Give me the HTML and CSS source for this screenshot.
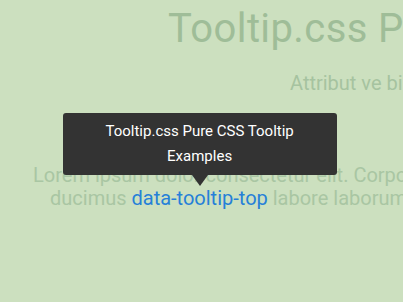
FILE: index.html
```html
<!DOCTYPE html>
<html lang="en">
  <head>
    <meta charset="UTF-8" />
    <meta name="viewport" content="width=device-width, initial-scale=1.0" />
    <title>Tooltip.css Pure CSS Tooltip Examples</title>
    <link rel="stylesheet" href="styles.css">
  </head>
  <body>
    <div class="page">
      <h1 class="title">Tooltip.css Pure CSS Tooltip Examples</h1>
      <p class="subtitle">Attribut ve bileşenler ile kullanım</p>

      <div class="lorem">
        <span class="line line-1">Lorem ipsum dolor consectetur elit. Corporis</span>
        <span class="line line-2">ducimus
          <a href="#" class="tip">data-tooltip-top<span class="tip-box">Tooltip.css Pure CSS Tooltip Examples</span></a>
          labore laborum
        </span>
      </div>
    </div>
  </body>
</html>
```

FILE: styles.css
```css
html,
body {
  margin: 0;
  height: 100%;
}
body {
  background-color: #cce0bf;
  font-family: Roboto, "Liberation Sans", sans-serif;
  overflow: hidden;
}
.page {
  white-space: nowrap;
}
.title {
  margin: 0;
  padding: 5px 0 0 168px;
  font-size: 40px;
  font-weight: 400;
  letter-spacing: 0.4px;
  line-height: 48px;
  color: #9fbd98;
}
.subtitle {
  margin: 18px 0 0;
  padding-left: 290px;
  font-size: 20px;
  line-height: 24px;
  color: #a6c3a0;
}
.lorem {
  margin-top: 69px;
  font-size: 20px;
  line-height: 23px;
  color: #a9c6a3;
}
.line {
  display: block;
}
.line-1 {
  padding-left: 33px;
}
.line-2 {
  padding-left: 50px;
}
.tip {
  position: relative;
  color: #2680d8;
  text-decoration: none;
}
.tip-box {
  position: absolute;
  left: 50%;
  bottom: calc(100% + 11px);
  transform: translateX(-50%);
  width: 274px;
  box-sizing: border-box;
  padding: 6px 20px;
  background-color: #333333;
  border-radius: 3px;
  color: #ffffff;
  font-size: 15px;
  line-height: 25px;
  text-align: center;
  white-space: normal;
}
.tip-box::after {
  content: "";
  position: absolute;
  top: 100%;
  left: 50%;
  margin-left: -8px;
  border: 8px solid transparent;
  border-top: 11px solid #333333;
  border-bottom: 0;
}
```
